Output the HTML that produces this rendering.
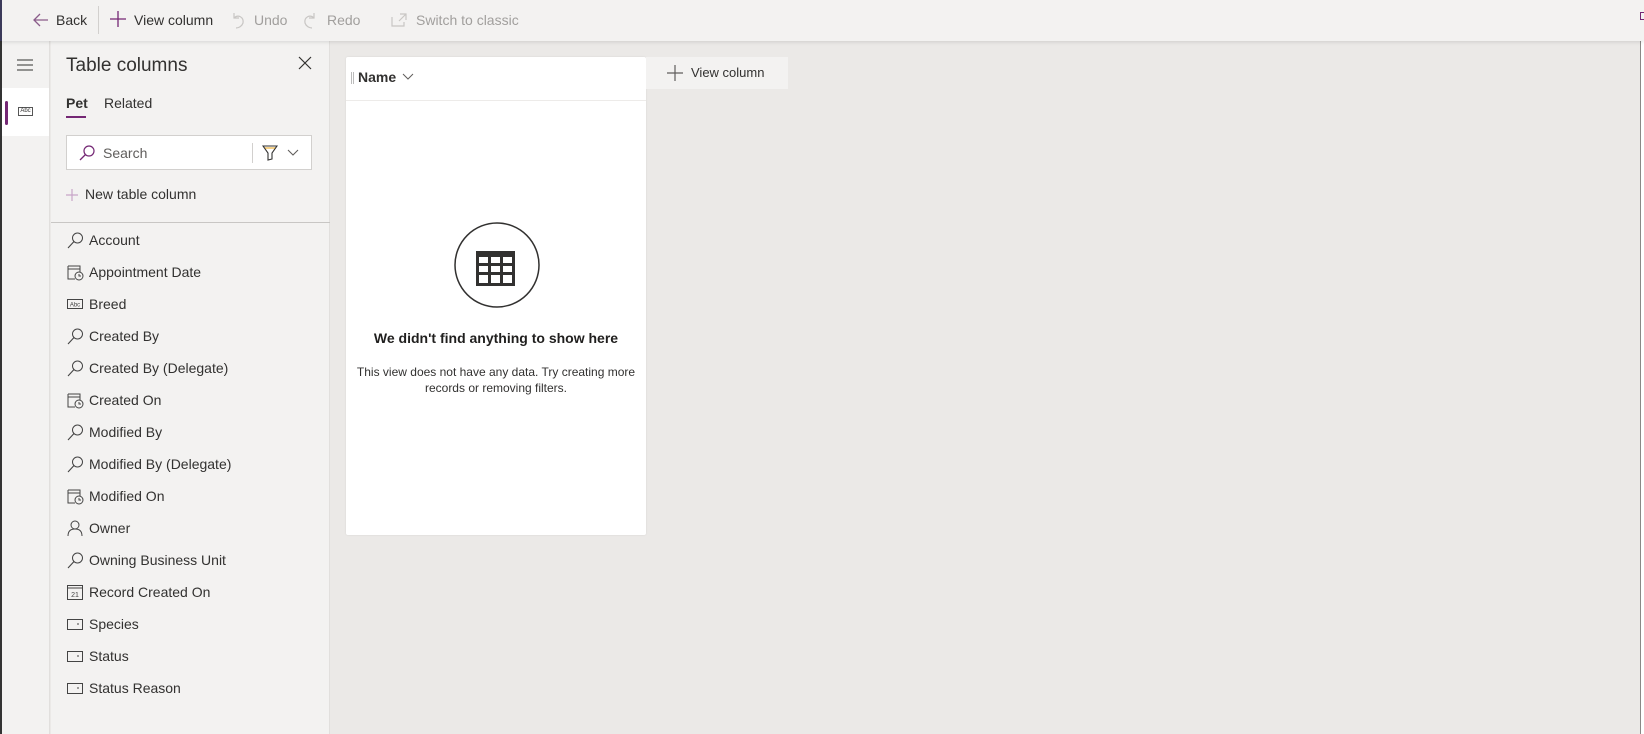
<!DOCTYPE html>
<html><head><meta charset="utf-8"><style>
*{box-sizing:border-box;margin:0;padding:0}
body{width:1644px;height:734px;overflow:hidden;background:#ebe9e7;font-family:"Liberation Sans",sans-serif;color:#323130;position:relative}
.abs{position:absolute}
.top{left:0;top:0;width:1644px;height:41px;background:#f3f2f1;box-shadow:0 1px 4px rgba(0,0,0,.12);z-index:2;border-left:2px solid #3b3a5a}
.tb{position:absolute;top:11px;font-size:14px;line-height:18px;white-space:nowrap}
.rail{left:0;top:41px;width:50px;height:693px;background:#f3f2f1;border-left:2px solid #333;border-right:1px solid #e1dfdd}
.panel{left:51px;top:41px;width:279px;height:693px;background:#f3f2f1;border-right:1px solid #e1dfdd}
.item{position:absolute;left:16px;font-size:14px;line-height:18px;white-space:nowrap}
.item span{position:absolute;left:22px;top:0}
.item svg{position:absolute;left:0;top:1px}
</style></head><body>
<div class="abs top">
  <svg class="abs" style="left:30px;top:11px" width="18" height="18" viewBox="0 0 18 18"><path d="M16 9H2M8 3L2 9l6 6" stroke="#8a5c8a" stroke-width="1.3" fill="none"/></svg>
  <div class="tb" style="left:54px">Back</div>
  <div class="abs" style="left:96px;top:6px;width:1px;height:28px;background:#d2d0ce"></div>
  <svg class="abs" style="left:107px;top:10px" width="18" height="18" viewBox="0 0 18 18"><path d="M9 1v16M1 9h16" stroke="#742774" stroke-width="1.3"/></svg>
  <div class="tb" style="left:132px">View column</div>
  <svg class="abs" style="left:228px;top:11px" width="16" height="18" viewBox="0 0 16 18"><path d="M4 2v5h5M4 7c4-4 10-1 9 5-1 3-4 5-7 5" stroke="#c8c6c4" stroke-width="1.2" fill="none"/></svg>
  <div class="tb" style="left:252px;color:#a19f9d">Undo</div>
  <svg class="abs" style="left:300px;top:11px" width="16" height="18" viewBox="0 0 16 18"><path d="M12 2v5H7M12 7C8 3 2 6 3 12c1 3 4 5 7 5" stroke="#c8c6c4" stroke-width="1.2" fill="none"/></svg>
  <div class="tb" style="left:325px;color:#a19f9d">Redo</div>
  <svg class="abs" style="left:389px;top:12px" width="18" height="16" viewBox="0 0 18 16"><path d="M1 5v9h12v-4M9 2h6v6M15 2L8 9" stroke="#c8c6c4" stroke-width="1.2" fill="none"/></svg>
  <div class="tb" style="left:414px;color:#a19f9d">Switch to classic</div>
  <div class="abs" style="left:1638px;top:12px;width:5px;height:8px;border:1px solid #742774"></div>
</div>
<div class="abs rail">
  <svg class="abs" style="left:15px;top:18px" width="16" height="12" viewBox="0 0 16 12"><path d="M0 1h16M0 6h16M0 11h16" stroke="#323130" stroke-width="1.1"/></svg>
  <div class="abs" style="left:0;top:47px;width:47px;height:48px;background:#fff"></div>
  <div class="abs" style="left:3px;top:60px;width:3px;height:24px;background:#742774;border-radius:2px"></div>
  <div class="abs" style="left:16px;top:66px;width:15px;height:9px;border:1px solid #555;font-size:6px;line-height:7px;text-align:center">Abc</div>
</div>
<div class="abs panel">
  <div class="abs" style="left:15px;top:13px;font-size:19px;line-height:24px">Table columns</div>
  <svg class="abs" style="left:247px;top:15px" width="14" height="14" viewBox="0 0 14 14"><path d="M1 1l12 12M13 1L1 13" stroke="#323130" stroke-width="1.2"/></svg>
  <div class="abs" style="left:15px;top:54px;font-size:14px;font-weight:bold;color:#323130">Pet</div>
  <div class="abs" style="left:15px;top:75px;width:20px;height:2px;background:#742774"></div>
  <div class="abs" style="left:53px;top:54px;font-size:14px">Related</div>
  <div class="abs" style="left:15px;top:94px;width:246px;height:35px;background:#fff;border:1px solid #d2d0ce">
    <svg class="abs" style="left:12px;top:9px" width="16" height="16" viewBox="0 0 16 16"><circle cx="10" cy="6" r="5" stroke="#742774" stroke-width="1.2" fill="none"/><path d="M6.5 9.5L1 15" stroke="#742774" stroke-width="1.3"/></svg>
    <div class="abs" style="left:36px;top:9px;font-size:14px;color:#605e5c">Search</div>
    <div class="abs" style="left:185px;top:7px;width:1px;height:20px;background:#d2d0ce"></div>
    <svg class="abs" style="left:195px;top:9px" width="16" height="16" viewBox="0 0 16 16"><path d="M1 1h14L10 8v6l-4 1V8z" stroke="#323130" stroke-width="1.1" fill="none"/><path d="M3 3h10" stroke="#e8a317" stroke-width="1"/></svg>
    <svg class="abs" style="left:220px;top:13px" width="12" height="8" viewBox="0 0 12 8"><path d="M1 1l5 5 5-5" stroke="#605e5c" stroke-width="1.1" fill="none"/></svg>
  </div>
  <svg class="abs" style="left:15px;top:148px" width="12" height="12" viewBox="0 0 12 12"><path d="M6 0v12M0 6h12" stroke="#c8a5c8" stroke-width="1.2"/></svg>
  <div class="abs" style="left:34px;top:145px;font-size:14px">New table column</div>
  <div class="abs" style="left:0;top:181px;width:279px;height:1px;background:#c8c6c4"></div>
  <div class="abs" style="left:0;top:0;width:279px">
    <div class="item" style="top:190px"><svg width="17" height="17" viewBox="0 0 17 17"><circle cx="10.5" cy="6" r="5" stroke="#444" fill="none"/><path d="M7 9.5L1 16" stroke="#444" stroke-width="1.1"/></svg><span>Account</span></div>
    <div class="item" style="top:222px"><svg width="17" height="17" viewBox="0 0 17 17"><path d="M1 2h12v6M1 2v13h7M1 5h12" stroke="#444" fill="none"/><circle cx="12" cy="12" r="4" stroke="#444" fill="#f3f2f1"/><path d="M12 10v2h2" stroke="#444" fill="none"/></svg><span>Appointment Date</span></div>
    <div class="item" style="top:254px"><svg width="17" height="17" viewBox="0 0 17 17"><rect x="0.5" y="3.5" width="15" height="9" stroke="#444" fill="none"/><text x="8" y="10.5" font-size="6" text-anchor="middle" fill="#444" font-family="Liberation Sans">Abc</text></svg><span>Breed</span></div>
    <div class="item" style="top:286px"><svg width="17" height="17" viewBox="0 0 17 17"><circle cx="10.5" cy="6" r="5" stroke="#444" fill="none"/><path d="M7 9.5L1 16" stroke="#444" stroke-width="1.1"/></svg><span>Created By</span></div>
    <div class="item" style="top:318px"><svg width="17" height="17" viewBox="0 0 17 17"><circle cx="10.5" cy="6" r="5" stroke="#444" fill="none"/><path d="M7 9.5L1 16" stroke="#444" stroke-width="1.1"/></svg><span>Created By (Delegate)</span></div>
    <div class="item" style="top:350px"><svg width="17" height="17" viewBox="0 0 17 17"><path d="M1 2h12v6M1 2v13h7M1 5h12" stroke="#444" fill="none"/><circle cx="12" cy="12" r="4" stroke="#444" fill="#f3f2f1"/><path d="M12 10v2h2" stroke="#444" fill="none"/></svg><span>Created On</span></div>
    <div class="item" style="top:382px"><svg width="17" height="17" viewBox="0 0 17 17"><circle cx="10.5" cy="6" r="5" stroke="#444" fill="none"/><path d="M7 9.5L1 16" stroke="#444" stroke-width="1.1"/></svg><span>Modified By</span></div>
    <div class="item" style="top:414px"><svg width="17" height="17" viewBox="0 0 17 17"><circle cx="10.5" cy="6" r="5" stroke="#444" fill="none"/><path d="M7 9.5L1 16" stroke="#444" stroke-width="1.1"/></svg><span>Modified By (Delegate)</span></div>
    <div class="item" style="top:446px"><svg width="17" height="17" viewBox="0 0 17 17"><path d="M1 2h12v6M1 2v13h7M1 5h12" stroke="#444" fill="none"/><circle cx="12" cy="12" r="4" stroke="#444" fill="#f3f2f1"/><path d="M12 10v2h2" stroke="#444" fill="none"/></svg><span>Modified On</span></div>
    <div class="item" style="top:478px"><svg width="17" height="17" viewBox="0 0 17 17"><circle cx="8" cy="5" r="4" stroke="#444" fill="none"/><path d="M1 16c0-5 3-7 7-7s7 2 7 7" stroke="#444" fill="none"/></svg><span>Owner</span></div>
    <div class="item" style="top:510px"><svg width="17" height="17" viewBox="0 0 17 17"><circle cx="10.5" cy="6" r="5" stroke="#444" fill="none"/><path d="M7 9.5L1 16" stroke="#444" stroke-width="1.1"/></svg><span>Owning Business Unit</span></div>
    <div class="item" style="top:542px"><svg width="17" height="17" viewBox="0 0 17 17"><rect x="0.5" y="1.5" width="15" height="14" stroke="#444" fill="none"/><path d="M1 4h15" stroke="#444"/><text x="8" y="13" font-size="7" text-anchor="middle" fill="#444" font-family="Liberation Sans">21</text></svg><span>Record Created On</span></div>
    <div class="item" style="top:574px"><svg width="17" height="17" viewBox="0 0 17 17"><rect x="0.5" y="3.5" width="15" height="10" stroke="#444" fill="none"/><path d="M10 8h2" stroke="#444"/></svg><span>Species</span></div>
    <div class="item" style="top:606px"><svg width="17" height="17" viewBox="0 0 17 17"><rect x="0.5" y="3.5" width="15" height="10" stroke="#444" fill="none"/><path d="M10 8h2" stroke="#444"/></svg><span>Status</span></div>
    <div class="item" style="top:638px"><svg width="17" height="17" viewBox="0 0 17 17"><rect x="0.5" y="3.5" width="15" height="10" stroke="#444" fill="none"/><path d="M10 8h2" stroke="#444"/></svg><span>Status Reason</span></div>
  </div>
</div>
<div class="abs" style="left:346px;top:57px;width:300px;height:478px;background:#fff;border-radius:2px;box-shadow:0 0 2px rgba(0,0,0,.08)">
  <div class="abs" style="left:5px;top:15px;width:3px;height:12px;border-left:1px solid #bbb;border-right:1px solid #bbb"></div>
  <div class="abs" style="left:12px;top:12px;font-size:14px;font-weight:bold;color:#323130">Name</div>
  <svg class="abs" style="left:56px;top:16px" width="12" height="8" viewBox="0 0 12 8"><path d="M1 1l5 5 5-5" stroke="#605e5c" stroke-width="1" fill="none"/></svg>
  <div class="abs" style="left:0;top:43px;width:300px;height:1px;background:#edebe9"></div>
  <svg class="abs" style="left:107px;top:165px" width="88" height="88" viewBox="0 0 88 88"><circle cx="44" cy="43" r="42" stroke="#323130" stroke-width="1.5" fill="none"/><rect x="23" y="29" width="39" height="35" fill="#323130"/><g fill="#fff"><rect x="26" y="35" width="9" height="6"/><rect x="38" y="35" width="9" height="6"/><rect x="50" y="35" width="9" height="6"/><rect x="26" y="44" width="9" height="6"/><rect x="38" y="44" width="9" height="6"/><rect x="50" y="44" width="9" height="6"/><rect x="26" y="53" width="9" height="8"/><rect x="38" y="53" width="9" height="8"/><rect x="50" y="53" width="9" height="8"/></g></svg>
  <div class="abs" style="left:0;top:273px;width:300px;text-align:center;font-size:14px;font-weight:bold;color:#201f1e">We didn't find anything to show here</div>
  <div class="abs" style="left:10px;top:307px;width:280px;text-align:center;font-size:12px;line-height:16px;color:#323130">This view does not have any data. Try creating more records or removing filters.</div>
</div>
<div class="abs" style="left:646px;top:57px;width:142px;height:32px;background:#f3f2f1">
  <svg class="abs" style="left:21px;top:8px" width="16" height="16" viewBox="0 0 16 16"><path d="M8 0v16M0 8h16" stroke="#605e5c" stroke-width="1.2"/></svg>
  <div class="abs" style="left:45px;top:8px;font-size:13px;color:#323130">View column</div>
</div>
<div class="abs" style="left:1640px;top:41px;width:4px;height:693px;background:#fff;border-left:1px solid #8a8886"></div>
</body></html>
